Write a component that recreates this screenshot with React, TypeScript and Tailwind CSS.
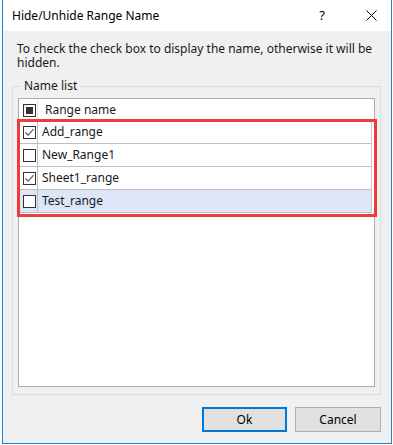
import React from 'react';

interface RangeItem {
  name: string;
  checked: boolean;
  selected?: boolean;
}

const ranges: RangeItem[] = [
  { name: 'Add_range', checked: true },
  { name: 'New_Range1', checked: false },
  { name: 'Sheet1_range', checked: true },
  { name: 'Test_range', checked: false, selected: true },
];

function CheckBox({ checked, partial }: { checked?: boolean; partial?: boolean }) {
  return (
    <div className="w-[13px] h-[13px] border border-[#333333] bg-white flex items-center justify-center">
      {partial && <div className="w-[7px] h-[7px] bg-[#333333]" />}
      {checked && (
        <svg width="11" height="11" viewBox="0 0 11 11">
          <path d="M1.5 5.5 L4.2 8.2 L9.5 2.2" fill="none" stroke="#555555" strokeWidth="1.1" />
        </svg>
      )}
    </div>
  );
}

export default function App() {
  return (
    <div
      className="w-[393px] h-[445px] bg-white overflow-hidden text-[12px] text-[#1a1a1a]"
      style={{ fontFamily: '"Noto Sans", "Liberation Sans", sans-serif' }}
    >
      <div className="ml-[2px] w-[390px] h-[444px] border-x border-b border-[#1883d7] flex flex-col">
        {/* Title bar */}
        <div className="h-[31px] bg-white flex items-center pl-[9px] shrink-0">
          <span className="text-[12px] text-black mt-[1px]">Hide/Unhide Range Name</span>
          <span className="ml-auto text-[13px] text-black mr-[41px]">?</span>
          <svg width="11" height="11" viewBox="0 0 11 11" className="mr-[14px]">
            <path d="M0.5 0.5 L10.5 10.5 M10.5 0.5 L0.5 10.5" stroke="#000" strokeWidth="1" />
          </svg>
        </div>

        {/* Body */}
        <div className="flex-1 bg-[#f0f0f0] flex flex-col px-[9px]">
          <p className="mt-[11px] px-[5px] leading-[14px] text-[#1a1a1a]">
            To check the check box to display the name, otherwise it will be hidden.
          </p>

          <fieldset className="mt-[8px] w-[369px] border border-[#dcdcdc] px-[5px] pb-[7px]">
            <legend className="ml-[3px] px-[3px] leading-[16px]">Name list</legend>

            <div className="relative mt-[4px] h-[289px] border border-[#abadb3] bg-white">
              {/* header */}
              <div className="flex h-[22px] items-center">
                <div className="w-[19px] h-full flex items-center pl-[4px] border-r border-[#e5e5e5]">
                  <CheckBox partial />
                </div>
                <span className="pl-[7px]">Range name</span>
              </div>

              {/* rows */}
              <div className="mr-[2px] border-r border-[#c8c8c8]">
                {ranges.map((r) => (
                  <div
                    key={r.name}
                    className={`flex h-[23px] items-center border-b border-[#bebebe] ${
                      r.selected ? 'bg-[#dce6f7]' : 'bg-white'
                    }`}
                  >
                    <div className="w-[19px] h-full flex items-center pl-[4px] border-r border-[#bebebe]">
                      <CheckBox checked={r.checked} />
                    </div>
                    <span className="pl-[4px]">{r.name}</span>
                  </div>
                ))}
              </div>

              {/* red highlight */}
              <div className="absolute left-[-2px] top-[20px] w-[360px] h-[98px] border-[3px] border-[#ef3b3b] pointer-events-none" />
            </div>
          </fieldset>

          <div className="flex justify-end gap-[8px] mt-[12px] pr-[1px]">
            <button className="w-[85px] h-[25px] bg-[#e1e1e1] border-2 border-[#0078d7] text-black">Ok</button>
            <button className="w-[86px] h-[25px] bg-[#e1e1e1] border border-[#adadad] text-black">Cancel</button>
          </div>
        </div>
      </div>
    </div>
  );
}
